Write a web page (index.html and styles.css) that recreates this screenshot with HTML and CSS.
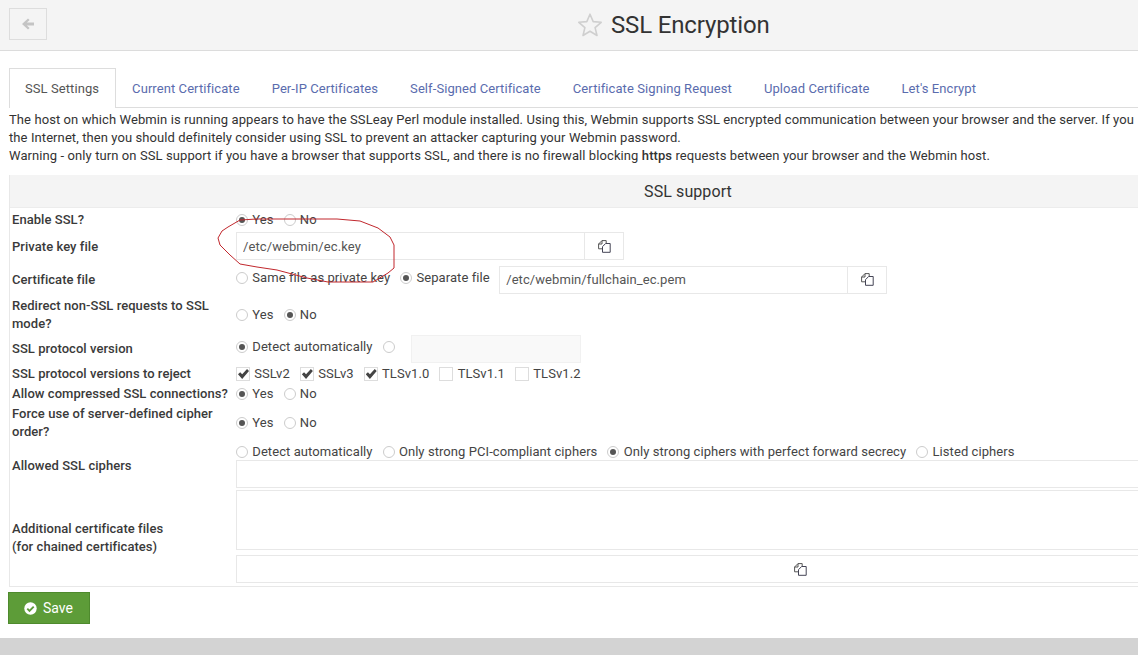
FILE: index.html
```html
<!DOCTYPE html>
<html lang="en">
<head>
    <meta charset="UTF-8">
    <meta name="viewport" content="width=device-width, initial-scale=1.0">
    <title>SSL Encryption</title>
    <link rel="stylesheet" href="styles.css">
</head>
<body>
    <header class="top-bar">
        <button class="back-btn" type="button" aria-label="Back">
            <svg width="14" height="14" viewBox="0 0 14 14"><path d="M7 1.5 8.6 3.1 5.9 5.6H13V8.4H5.9L8.6 10.9 7 12.5 1 7Z" fill="#c4c4c4"/></svg>
        </button>
        <h1 class="page-title">
            <svg class="star" width="26" height="26" viewBox="0 0 26 26"><path d="M13 2.2 16.2 9.6 24.2 10.3 18.1 15.6 20 23.5 13 19.3 6 23.5 7.9 15.6 1.8 10.3 9.8 9.6Z" fill="none" stroke="#cfcfcf" stroke-width="1.6" stroke-linejoin="round"/></svg>
            SSL Encryption
        </h1>
    </header>

    <main class="content">
        <ul class="tabs">
            <li class="tab active"><a href="#">SSL Settings</a></li>
            <li class="tab"><a href="#">Current Certificate</a></li>
            <li class="tab"><a href="#">Per-IP Certificates</a></li>
            <li class="tab"><a href="#">Self-Signed Certificate</a></li>
            <li class="tab"><a href="#">Certificate Signing Request</a></li>
            <li class="tab"><a href="#">Upload Certificate</a></li>
            <li class="tab"><a href="#">Let's Encrypt</a></li>
        </ul>

        <p class="intro">The host on which Webmin is running appears to have the SSLeay Perl module installed. Using this, Webmin supports SSL encrypted communication between your browser and the server. If you<br>
        the Internet, then you should definitely consider using SSL to prevent an attacker capturing your Webmin password.<br>
        Warning - only turn on SSL support if you have a browser that supports SSL, and there is no firewall blocking <b>https</b> requests between your browser and the Webmin host.</p>

        <form class="panel">
            <h2 class="panel-title">SSL support</h2>
            <table class="settings">
                <colgroup><col class="label-col"><col></colgroup>
                <tr class="h24">
                    <th>Enable SSL?</th>
                    <td><div class="opts">
                        <label class="opt"><input type="radio" name="ssl" checked>Yes</label>
                        <label class="opt"><input type="radio" name="ssl">No</label>
                    </div></td>
                </tr>
                <tr class="h30">
                    <th>Private key file</th>
                    <td class="top"><div class="file-group">
                        <input class="text key-input" type="text" value="/etc/webmin/ec.key">
                        <button class="copy-btn" type="button" aria-label="Browse"><svg width="13" height="13" viewBox="0 0 13 13"><use href="#copy-icon"/></svg></button>
                    </div></td>
                </tr>
                <tr class="h35">
                    <th>Certificate file</th>
                    <td><div class="opts beside-input">
                        <label class="opt"><input type="radio" name="cert">Same file as private key</label>
                        <label class="opt"><input type="radio" name="cert" checked>Separate file</label>
                        <div class="file-group">
                            <input class="text key-input" type="text" value="/etc/webmin/fullchain_ec.pem">
                            <button class="copy-btn" type="button" aria-label="Browse"><svg width="13" height="13" viewBox="0 0 13 13"><use href="#copy-icon"/></svg></button>
                        </div>
                    </div></td>
                </tr>
                <tr class="h36">
                    <th>Redirect non-SSL requests to SSL mode?</th>
                    <td><div class="opts">
                        <label class="opt"><input type="radio" name="redirect">Yes</label>
                        <label class="opt"><input type="radio" name="redirect" checked>No</label>
                    </div></td>
                </tr>
                <tr class="h31">
                    <th>SSL protocol version</th>
                    <td><div class="opts beside-input">
                        <label class="opt"><input type="radio" name="version" checked>Detect automatically</label>
                        <label class="opt"><input type="radio" name="version"></label>
                        <input class="text version-input" type="text" disabled>
                    </div></td>
                </tr>
                <tr class="h20">
                    <th>SSL protocol versions to reject</th>
                    <td><div class="opts">
                        <label class="opt"><input type="checkbox" checked>SSLv2</label>
                        <label class="opt"><input type="checkbox" checked>SSLv3</label>
                        <label class="opt"><input type="checkbox" checked>TLSv1.0</label>
                        <label class="opt"><input type="checkbox">TLSv1.1</label>
                        <label class="opt"><input type="checkbox">TLSv1.2</label>
                    </div></td>
                </tr>
                <tr class="h20">
                    <th>Allow compressed SSL connections?</th>
                    <td><div class="opts">
                        <label class="opt"><input type="radio" name="compress" checked>Yes</label>
                        <label class="opt"><input type="radio" name="compress">No</label>
                    </div></td>
                </tr>
                <tr class="h38">
                    <th>Force use of server-defined cipher order?</th>
                    <td><div class="opts">
                        <label class="opt"><input type="radio" name="order" checked>Yes</label>
                        <label class="opt"><input type="radio" name="order">No</label>
                    </div></td>
                </tr>
                <tr class="h47">
                    <th>Allowed SSL ciphers</th>
                    <td>
                        <div class="opts cipher-opts">
                            <label class="opt"><input type="radio" name="ciphers">Detect automatically</label>
                            <label class="opt"><input type="radio" name="ciphers">Only strong PCI-compliant ciphers</label>
                            <label class="opt"><input type="radio" name="ciphers" checked>Only strong ciphers with perfect forward secrecy</label>
                            <label class="opt"><input type="radio" name="ciphers">Listed ciphers</label>
                        </div>
                        <input class="text full-input" type="text">
                    </td>
                </tr>
                <tr>
                    <th>Additional certificate files<br>(for chained certificates)</th>
                    <td class="extra-cell">
                        <textarea class="text extra-area"></textarea>
                        <button class="copy-btn wide" type="button" aria-label="Browse"><svg width="13" height="13" viewBox="0 0 13 13"><use href="#copy-icon"/></svg></button>
                    </td>
                </tr>
            </table>
        </form>

        <button class="save-btn" type="button">
            <svg width="13" height="13" viewBox="0 0 13 13"><circle cx="6.5" cy="6.5" r="6.2" fill="#fff"/><path d="M3.3 6.7 5.5 8.9 9.7 4.7" fill="none" stroke="#5d9c38" stroke-width="1.9"/></svg>
            Save
        </button>
    </main>

    <footer class="bottom-bar"></footer>

    <!-- hand drawn circle on top of the screenshot -->
    <svg class="scribble" width="1138" height="655" viewBox="0 0 1138 655">
        <path d="M218 238 222 231 228 227 240 220 257 219 283 219 337 219 360 221 378 228 390 237 394 245 394 268 388 273 373 282 328 282 307 278 277 270 257 267 240 264 230 255 220 245Z" fill="none" stroke="#c1272d" stroke-width="1"/>
    </svg>

    <svg width="0" height="0" class="defs">
        <symbol id="copy-icon" viewBox="0 0 13 13">
            <path d="M4 .6H8.2V3.5M4 .6 .6 4V8.8H4.5M4 .6V4H.6" fill="none" stroke="#555" stroke-width="1"/>
            <path d="M4.5 6.7 7.6 3.5H12.2V12.3H4.5Z" fill="#fff" stroke="#445" stroke-width="1"/>
        </symbol>
    </svg>
</body>
</html>
```

FILE: styles.css
```css
* {
    box-sizing: border-box;
}
html, body {
    margin: 0;
    height: 655px;
    overflow: hidden;
}
body {
    font-family: Roboto, "Liberation Sans", sans-serif;
    font-size: 13px;
    line-height: 18px;
    letter-spacing: 0.09px;
    color: #333;
    background: #fff;
    position: relative;
}

/* top bar */
.top-bar {
    height: 51px;
    background: #f4f4f4;
    border-bottom: 1px solid #dcdcdc;
    padding: 8px 0 0 9px;
    display: flex;
    position: relative;
}
.back-btn {
    width: 38px;
    height: 32px;
    background: #f4f4f4;
    border: 1px solid #ddd;
    display: flex;
    align-items: center;
    justify-content: center;
    padding: 0;
}
.page-title {
    margin: 0 0 0 525px;
    font-size: 24px;
    font-weight: 400;
    line-height: 34px;
    letter-spacing: -0.15px;
    color: #333;
    display: flex;
    align-items: center;
    gap: 8px;
    height: 34px;
}
.star {
    margin-left: 5px;
}

/* tabs */
.content {
    padding: 17px 0 0 8px;
    width: 1367px;
}
.tabs {
    list-style: none;
    margin: 0 0 0 1px;
    padding: 0;
    display: flex;
    border-bottom: 1px solid #ddd;
    height: 40px;
    letter-spacing: 0.08px;
}
.tab {
    border: 1px solid transparent;
    border-bottom: none;
    height: 40px;
}
.tab a {
    display: block;
    padding: 11px 15px;
    color: #5a6cae;
    text-decoration: none;
}
.tab.active {
    border-color: #ddd;
    background: #fff;
}
.tab.active a {
    color: #555;
    padding-right: 16px;
}
.intro {
    margin: 3px 0 10px 1px;
    white-space: nowrap;
}
.intro b {
    font-weight: 500;
}

/* settings panel */
.panel {
    margin-left: 1px;
    border: 1px solid #e8e8e8;
    border-top: none;
}
.panel-title {
    margin: 0;
    height: 33px;
    background: #f4f4f4;
    border-bottom: 1px solid #ececec;
    font-size: 16px;
    font-weight: 400;
    line-height: 33px;
    text-align: center;
    color: #333;
}
.settings {
    width: 100%;
    table-layout: fixed;
    border-collapse: collapse;
}
.label-col {
    width: 226px;
}
.settings th {
    padding: 0 0 0 2px;
    font-weight: 500;
    letter-spacing: 0.05px;
    text-align: left;
    vertical-align: middle;
    color: #3a3a3a;
}
.settings td {
    padding: 0;
    vertical-align: middle;
}
.settings td.top {
    vertical-align: top;
}
.h20 th, .h20 td { height: 20px; }
.h24 th, .h24 td { height: 24px; }
.h30 th, .h30 td { height: 30px; }
.h31 th, .h31 td { height: 31px; }
.h35 th, .h35 td { height: 35px; }
.h36 th, .h36 td { height: 36px; }
.h38 th, .h38 td { height: 38px; }
.h47 th, .h47 td { height: 47px; }

/* radios and checkboxes */
.opts {
    display: flex;
    align-items: center;
    gap: 10px;
    white-space: nowrap;
    letter-spacing: 0.07px;
}
.cipher-opts {
    height: 18px;
    padding-top: 2px;
}
.opt {
    display: flex;
    align-items: center;
    color: #444;
}
.beside-input .opt {
    margin-bottom: 4px;
}
.beside-input .file-group {
    margin-left: -0.5px;
}
.opt input {
    appearance: none;
    margin: 0 4.3px 0 0;
    position: relative;
    background: #fff;
    flex: none;
}
.opt input[type="radio"] {
    width: 12px;
    height: 12px;
    border: 1px solid #ccc;
    border-radius: 50%;
}
.opt input[type="radio"]:checked::after {
    content: "";
    position: absolute;
    left: 2px;
    top: 2px;
    width: 6px;
    height: 6px;
    border-radius: 50%;
    background: #555;
}
.opt input[type="checkbox"] {
    width: 14px;
    height: 14px;
    border: 1px solid #ddd;
}
.opt input[type="checkbox"]:checked::after {
    content: "";
    position: absolute;
    left: 1px;
    top: 1px;
    width: 11px;
    height: 10px;
    background: #444;
    clip-path: polygon(0 52%, 20% 32%, 38% 52%, 82% 0, 100% 20%, 38% 100%);
}

/* text inputs */
.text {
    display: block;
    font-family: inherit;
    font-size: 13px;
    letter-spacing: inherit;
    color: #555;
    height: 28px;
    padding: 0 6px;
    border: 1px solid #e8e8e8;
    background: #fff;
    outline: none;
}
.file-group {
    display: flex;
}
.key-input {
    width: 349px;
}
.copy-btn {
    width: 40px;
    height: 28px;
    margin-left: -1px;
    padding: 0;
    background: #fff;
    border: 1px solid #e8e8e8;
    display: flex;
    align-items: center;
    justify-content: center;
}
.copy-btn.wide {
    width: 1128px;
    margin: 5px 0 3px;
}
.version-input {
    width: 170px;
    margin-left: 2px;
    background: #f9f9f9;
    border-color: #f1f1f1;
}
.full-input {
    width: 1128px;
    height: 28px;
    margin-bottom: 2px;
}
.extra-area {
    width: 1128px;
    height: 60px;
    resize: none;
}

/* save button */
.save-btn {
    margin-top: 5px;
    width: 82px;
    height: 32px;
    background: #5d9c38;
    border: 1px solid #4e8a2d;
    color: #fff;
    font-family: inherit;
    font-size: 14px;
    display: flex;
    align-items: center;
    justify-content: center;
    gap: 6px;
    padding: 0 1px 0 0;
}

.bottom-bar {
    position: absolute;
    left: 0;
    right: 0;
    top: 638px;
    bottom: 0;
    background: #d3d3d3;
}
.scribble {
    position: absolute;
    left: 0;
    top: 0;
    pointer-events: none;
}
.defs {
    position: absolute;
}
```
